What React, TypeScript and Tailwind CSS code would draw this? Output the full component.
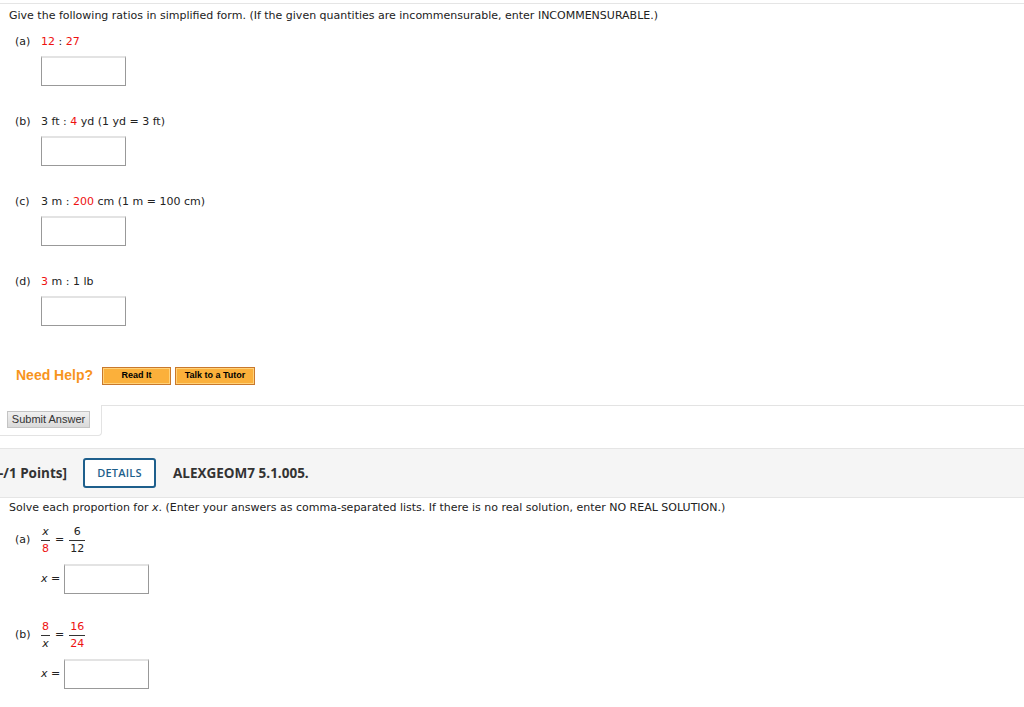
import React from "react";

const red = "text-[#ee1111]";

function AnswerBox({ className = "" }: { className?: string }) {
  return (
    <div
      className={`h-[30px] w-[85px] border border-[#999] border-t-2 border-t-[#e3e3e3] bg-white ${className}`}
    />
  );
}

function Frac({ num, den }: { num: React.ReactNode; den: React.ReactNode }) {
  return (
    <span className="inline-flex flex-col items-center">
      <span className="px-[1px] leading-[16px]">{num}</span>
      <span className="w-full border-t border-[#333] px-[1px] text-center leading-[16px]">{den}</span>
    </span>
  );
}

function HelpButton({ label, width }: { label: string; width: string }) {
  return (
    <button
      type="button"
      className={`${width} h-[18px] border border-[#c9782c] bg-[#fbb03b] p-0`}
    >
      <span className="flex h-full w-full items-center justify-center border border-[#ffd27a] font-['Liberation_Sans',Arial,sans-serif] text-[9px] font-bold text-black">
        {label}
      </span>
    </button>
  );
}

const parts = [
  { key: "a", text: <><span className={red}>12</span> : <span className={red}>27</span></> },
  { key: "b", text: <>3 ft : <span className={red}>4</span> yd (1 yd = 3 ft)</> },
  { key: "c", text: <>3 m : <span className={red}>200</span> cm (1 m = 100 cm)</> },
  { key: "d", text: <><span className={red}>3</span> m : 1 lb</> },
];

export default function App() {
  return (
    <div className="min-h-[707px] bg-white pt-[3px] font-['DejaVu_Sans',Verdana,sans-serif] text-[11px] text-[#222]">
      <div className="border-t border-[#e5e5e5]">
        <p className="ml-[9px] mt-[4px] leading-[15px]">
          Give the following ratios in simplified form. (If the given quantities are incommensurable, enter INCOMMENSURABLE.)
        </p>

        {parts.map((p, i) => (
          <div key={p.key} className={i === 0 ? "mt-[11px]" : "mt-[28px]"}>
            <div className="flex leading-[15px]">
              <span className="ml-[15px] w-[26px]">({p.key})</span>
              <span className="whitespace-pre">{p.text}</span>
            </div>
            <AnswerBox className="ml-[41px] mt-[7px]" />
          </div>
        ))}

        <div className="ml-[16px] mt-[39px] flex items-center gap-[9px]">
          <span className="font-['Liberation_Sans',Arial,sans-serif] text-[14px] font-bold text-[#f7941d]">
            Need Help?
          </span>
          <div className="flex gap-[4px]">
            <HelpButton label="Read It" width="w-[69px]" />
            <HelpButton label="Talk to a Tutor" width="w-[80px]" />
          </div>
        </div>

        <div className="mt-[19px] flex">
          <div className="flex h-[31px] w-[102px] items-start rounded-br-[4px] border-b border-r border-[#e3e3e3] pl-[7px] pt-[6px]">
            <button
              type="button"
              className="h-[17px] w-[83px] border border-[#c4c4c4] bg-gradient-to-b from-[#f0f0f0] to-[#dadada] p-0 font-['Liberation_Sans',Arial,sans-serif] text-[11px] leading-[15px] text-[#333]"
            >
              Submit Answer
            </button>
          </div>
          <div className="flex-1 border-t border-[#e3e3e3]" />
        </div>

        <div className="mt-[12px] flex h-[50px] items-center border-y border-[#e5e5e5] bg-[#f5f5f5] font-['Open_Sans',sans-serif] text-[13.5px] font-bold text-[#333]">
          <span className="-ml-[1px]">-/1 Points]</span>
          <button
            type="button"
            className="ml-[16px] h-[30px] w-[73px] rounded-[3px] border-2 border-[#1e5f8c] bg-white font-['Open_Sans',sans-serif] text-[11px] font-semibold tracking-[0.2px] text-[#1e5f8c]"
          >
            DETAILS
          </button>
          <span className="ml-[17px]">ALEXGEOM7 5.1.005.</span>
        </div>

        <p className="ml-[9px] mt-[2px] leading-[15px]">
          Solve each proportion for <i>x</i>. (Enter your answers as comma-separated lists. If there is no real solution, enter NO REAL SOLUTION.)
        </p>

        <div className="mt-[9px] flex items-center">
          <span className="ml-[15px] w-[26px]">(a)</span>
          <Frac num={<i>x</i>} den={<span className={red}>8</span>} />
          <span className="mx-[5px]">=</span>
          <Frac num="6" den="12" />
        </div>
        <div className="ml-[41px] mt-[7px] flex items-center">
          <span className="w-[23px]"><i>x</i> =</span>
          <AnswerBox />
        </div>

        <div className="mt-[25px] flex items-center">
          <span className="ml-[15px] w-[26px]">(b)</span>
          <Frac num={<span className={red}>8</span>} den={<i>x</i>} />
          <span className="mx-[5px]">=</span>
          <Frac num={<span className={red}>16</span>} den={<span className={red}>24</span>} />
        </div>
        <div className="ml-[41px] mt-[7px] flex items-center">
          <span className="w-[23px]"><i>x</i> =</span>
          <AnswerBox />
        </div>
      </div>
    </div>
  );
}
